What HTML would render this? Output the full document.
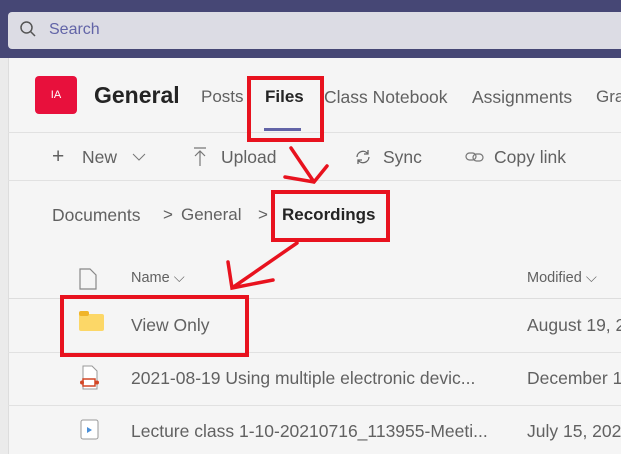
<!DOCTYPE html><html><head><style>
body{margin:0;width:621px;height:454px;overflow:hidden;background:#f5f5f5;font-family:"Liberation Sans",sans-serif;position:relative;color:#424242}
.a{position:absolute;white-space:nowrap}
.top{position:absolute;left:0;top:0;width:621px;height:58px;background:#464775}
.search{position:absolute;left:8px;top:12px;width:620px;height:37px;background:#dcdce4;border-radius:4px}
.line{position:absolute;height:1px;background:#e1e1e1}
.red{position:absolute;border:4px solid #e8121e;box-sizing:border-box}
.g{color:#616161}
</style></head><body>
<div class="top"></div>
<div class="search"></div>
<svg class="a" style="left:19px;top:20px" width="18" height="18"><circle cx="7.5" cy="7.5" r="5.5" fill="none" stroke="#555" stroke-width="1.5"/><line x1="11.5" y1="11.5" x2="16" y2="16" stroke="#555" stroke-width="1.5"/></svg>
<div class="a" style="left:49px;top:21px;font-size:16px;color:#6264a7">Search</div>
<div class="a" style="left:0;top:58px;width:8px;height:396px;background:#ebebeb;border-right:1px solid #ddd"></div>
<div class="a" style="left:35px;top:76px;width:42px;height:38px;background:#e8103c;border-radius:4px;color:#fff;font-size:11px;line-height:38px;text-align:center">IA</div>
<div class="a" style="left:94px;top:82px;font-size:23px;font-weight:bold;color:#242424">General</div>
<div class="a g" style="left:201px;top:87px;font-size:17px">Posts</div>
<div class="a" style="left:265px;top:87px;font-size:17px;font-weight:bold;color:#242424">Files</div>
<div class="a" style="left:264px;top:128px;width:37px;height:3px;background:#6264a7"></div>
<div class="a g" style="left:324px;top:87px;font-size:17.5px">Class Notebook</div>
<div class="a g" style="left:472px;top:87px;font-size:17.5px">Assignments</div>
<div class="a g" style="left:596px;top:87px;font-size:17px">Gra</div>
<div class="line" style="left:8px;top:132px;width:613px"></div>
<div class="a g" style="left:52px;top:145px;font-size:21px;font-weight:300">+</div>
<div class="a g" style="left:82px;top:147px;font-size:17.5px">New</div>
<svg class="a" style="left:132px;top:152px" width="14" height="10"><path d="M1 2l6 6 6-6" fill="none" stroke="#777"/></svg>
<svg class="a" style="left:193px;top:147px" width="14" height="20"><path d="M1 1h12M7 4v15M2 9l5-5 5 5" fill="none" stroke="#777" stroke-width="1.2"/></svg>
<div class="a g" style="left:221px;top:147px;font-size:17.5px">Upload</div>
<svg class="a" style="left:354px;top:148px" width="18" height="18"><path d="M3 9a6 6 0 0 1 11-3M15 9a6 6 0 0 1-11 3M14 2v4h-4M4 16v-4h4" fill="none" stroke="#666" stroke-width="1.3"/></svg>
<div class="a g" style="left:383px;top:147px;font-size:17.5px">Sync</div>
<svg class="a" style="left:465px;top:150px" width="20" height="14"><rect x="1" y="3" width="10" height="7" rx="3.5" fill="none" stroke="#777" stroke-width="1.2"/><rect x="8" y="4" width="10" height="7" rx="3.5" fill="none" stroke="#777" stroke-width="1.2"/></svg>
<div class="a g" style="left:494px;top:147px;font-size:17.5px">Copy link</div>
<div class="line" style="left:8px;top:180px;width:613px"></div>
<div class="a g" style="left:52px;top:205px;font-size:17.5px">Documents</div>
<div class="a g" style="left:163px;top:205px;font-size:17px">&gt;</div>
<div class="a g" style="left:181px;top:205px;font-size:17px">General</div>
<div class="a g" style="left:258px;top:205px;font-size:17px">&gt;</div>
<div class="a" style="left:282px;top:205px;font-size:17px;font-weight:bold;color:#242424">Recordings</div>
<svg class="a" style="left:78px;top:268px" width="20" height="22"><path d="M2 1h10l6 6v14H2z" fill="none" stroke="#888" stroke-width="1.2"/></svg>
<div class="a g" style="left:131px;top:270px;font-size:14.5px">Name ⌵</div>
<div class="a g" style="left:527px;top:270px;font-size:14.5px">Modified ⌵</div>
<div class="line" style="left:8px;top:298px;width:613px;background:#ddd"></div>
<div class="a" style="left:79px;top:314px;width:25px;height:17px;background:#fcd767;border-radius:2px"></div>
<div class="a" style="left:79px;top:311px;width:10px;height:5px;background:#f0b429;border-radius:2px"></div>
<div class="a g" style="left:131px;top:315px;font-size:17.5px">View Only</div>
<div class="a g" style="left:527px;top:315px;font-size:17.5px">August 19, 2</div>
<div class="line" style="left:8px;top:352px;width:613px"></div>
<svg class="a" style="left:78px;top:365px" width="24" height="26"><path d="M5 1h9l5 5v18H5z" fill="#fff" stroke="#999"/><rect x="5" y="14" width="12" height="7" fill="#fff" stroke="#d24726" stroke-width="1.5"/><circle cx="4" cy="17.5" r="2" fill="#d24726"/><circle cx="19" cy="17.5" r="2" fill="#d24726"/></svg>
<div class="a g" style="left:131px;top:368px;font-size:17.5px">2021-08-19 Using multiple electronic devic...</div>
<div class="a g" style="left:527px;top:368px;font-size:17.5px">December 1</div>
<div class="line" style="left:8px;top:405px;width:613px"></div>
<svg class="a" style="left:79px;top:418px" width="22" height="24"><rect x="2" y="2" width="17" height="19" rx="2" fill="#fff" stroke="#999"/><path d="M8 9l5 3-5 3z" fill="#4a8fd8"/></svg>
<div class="a g" style="left:131px;top:421px;font-size:17.5px">Lecture class 1-10-20210716_113955-Meeti...</div>
<div class="a g" style="left:527px;top:421px;font-size:17.5px">July 15, 202</div>
<div class="red" style="left:247px;top:76px;width:77px;height:66px"></div>
<div class="red" style="left:271px;top:190px;width:119px;height:52px"></div>
<div class="red" style="left:60px;top:295px;width:189px;height:62px"></div>
<svg class="a" style="left:0;top:0" width="621" height="454"><g fill="none" stroke="#e8121e" stroke-width="3.5" stroke-linecap="round"><path d="M291 148L314 182M285 177L314 182L327 166M297 243L232 288M228 262L232 288L273 280"/></g></svg>
</body></html>
